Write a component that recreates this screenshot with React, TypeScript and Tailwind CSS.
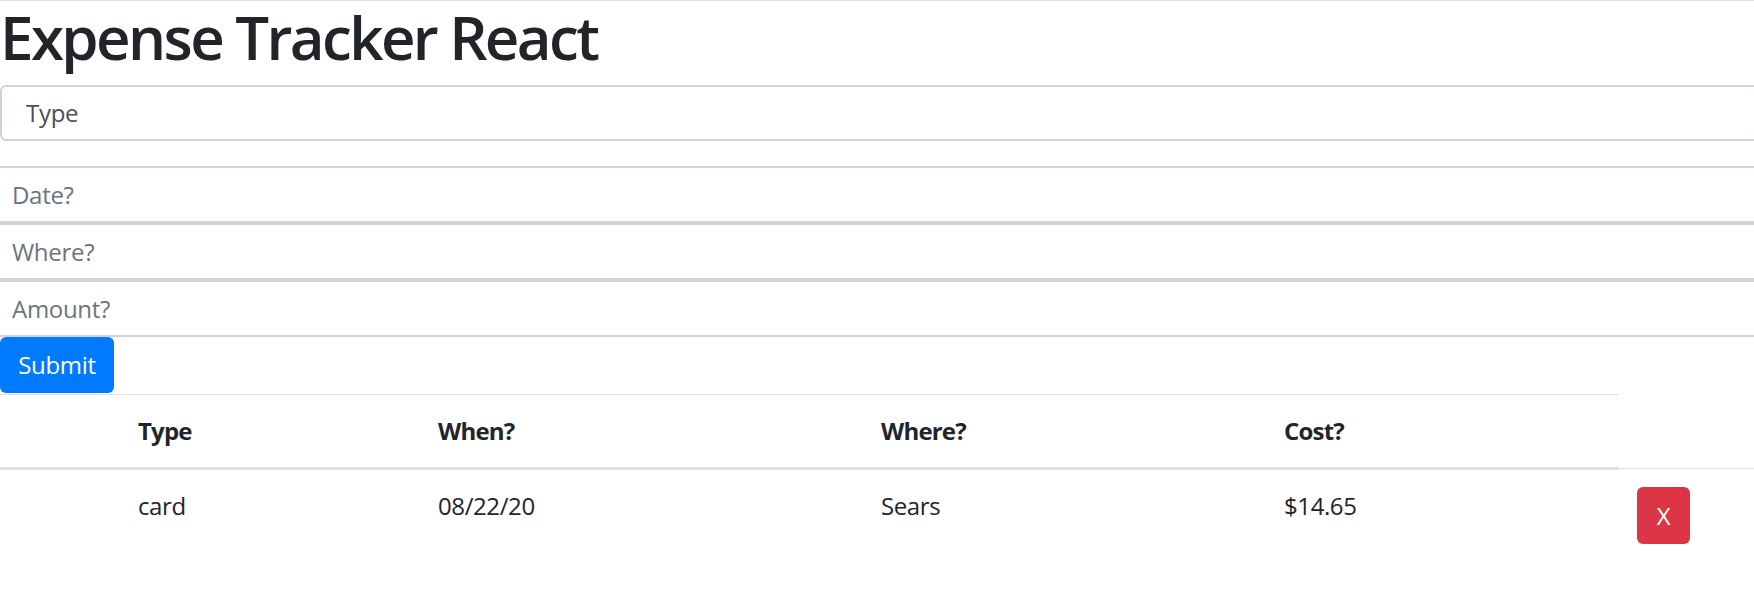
import React from 'react'

const expenses = [
  { type: 'card', date: '08/22/20', where: 'Sears', cost: '$14.65' },
]

export default function App() {
  return (
    <div className="min-h-screen bg-white border-t border-[#dee2e6] text-[#212529] font-['Open_Sans',sans-serif]">
      <h1 className="text-[60px] leading-[72px] font-semibold tracking-[-2.6px] mb-3">Expense Tracker React</h1>

      <form onSubmit={(e) => e.preventDefault()}>
        <select className="appearance-none block w-full h-[56px] border-2 border-r-0 border-[#ced4da] rounded-l-[6px] pl-[24px] text-[24px] tracking-[-0.3px] text-[#495057] bg-white outline-none">
          <option>Type</option>
        </select>

        <div className="mt-[25px]">
          {['Date?', 'Where?', 'Amount?'].map((p) => (
            <input
              key={p}
              placeholder={p}
              className="block w-full h-[57px] border-y-2 border-[#ced4da] pl-3 text-[24px] tracking-[-0.3px] outline-none placeholder:text-[#6c757d]"
            />
          ))}
        </div>

        <button
          type="submit"
          className="block w-[114px] h-[56px] rounded-[6px] bg-[#007bff] text-white text-[24px] leading-[36px] tracking-[-0.3px]"
        >
          Submit
        </button>
      </form>

      <table className="w-full table-fixed mt-px text-[24px] leading-[36px] tracking-[-0.4px]">
        <colgroup>
          <col className="w-[120px]" />
          <col className="w-[300px]" />
          <col className="w-[443px]" />
          <col className="w-[403px]" />
          <col className="w-[353px]" />
          <col />
        </colgroup>
        <thead>
          <tr>
            {['', 'Type', 'When?', 'Where?', 'Cost?'].map((h, i) => (
              <th
                key={i}
                className="text-left font-bold tracking-[-0.8px] p-[18px] border-t border-b-[3px] border-[#dee2e6] align-bottom"
              >
                {h}
              </th>
            ))}
          </tr>
        </thead>
        <tbody>
          {expenses.map((x) => (
            <tr key={x.date + x.where}>
              <td className="p-[18px] border-t border-[#dee2e6] align-top"></td>
              <td className="p-[18px] border-t border-[#dee2e6] align-top">{x.type}</td>
              <td className="p-[18px] border-t border-[#dee2e6] align-top">{x.date}</td>
              <td className="p-[18px] border-t border-[#dee2e6] align-top">{x.where}</td>
              <td className="p-[18px] border-t border-[#dee2e6] align-top">{x.cost}</td>
              <td className="p-[18px] border-t border-[#dee2e6] align-top">
                <button className="w-[53px] h-[57px] rounded-[6px] bg-[#dc3545] text-white text-[24px]">X</button>
              </td>
            </tr>
          ))}
        </tbody>
      </table>
    </div>
  )
}
